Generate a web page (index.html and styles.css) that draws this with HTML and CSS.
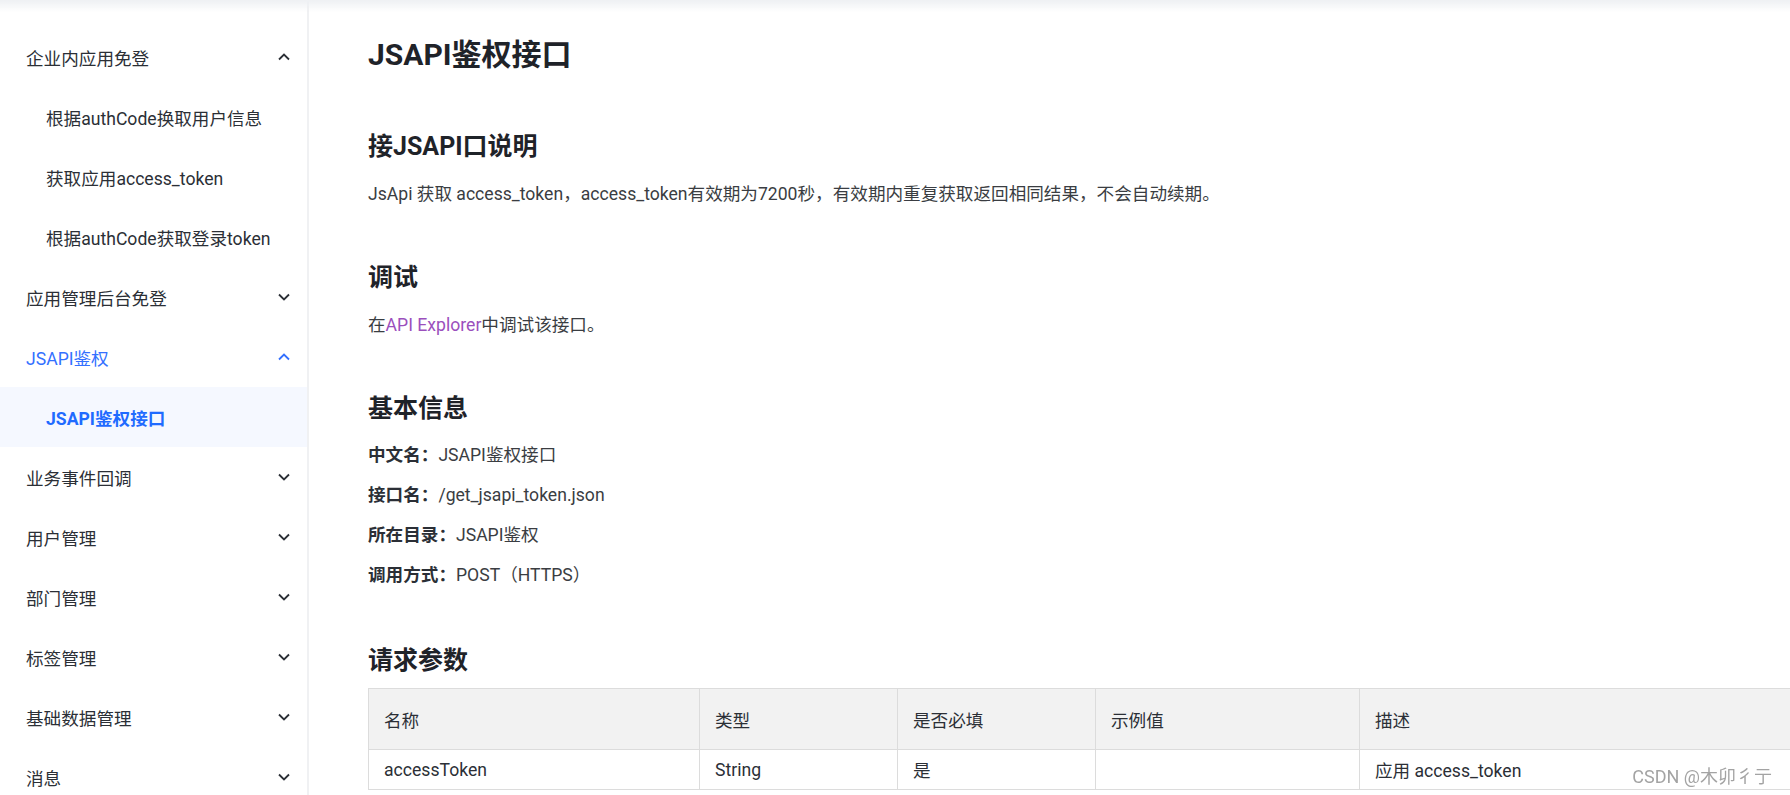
FILE: index.html
```html
<!DOCTYPE html>
<html lang="zh-CN">
<head>
    <meta charset="UTF-8">
    <meta name="viewport" content="width=device-width, initial-scale=1.0">
    <title>JSAPI鉴权接口</title>
    <link rel="stylesheet" href="styles.css">
</head>
<body>
    <div class="top-shadow"></div>
    <div class="layout">
        <nav class="sidebar">
            <div class="menu-group">
                <div class="menu-title">企业内应用免登 <svg class="chevron" viewBox="0 0 12 8"><path d="M1 6.5 6 1.5l5 5"/></svg></div>
                <div class="menu-item">根据authCode换取用户信息</div>
                <div class="menu-item">获取应用access_token</div>
                <div class="menu-item">根据authCode获取登录token</div>
            </div>
            <div class="menu-title">应用管理后台免登 <svg class="chevron" viewBox="0 0 12 8"><path d="M1 1.5 6 6.5l5-5"/></svg></div>
            <div class="menu-group">
                <div class="menu-title active">JSAPI鉴权 <svg class="chevron" viewBox="0 0 12 8"><path d="M1 6.5 6 1.5l5 5"/></svg></div>
                <div class="menu-item selected">JSAPI鉴权接口</div>
            </div>
            <div class="menu-title">业务事件回调 <svg class="chevron" viewBox="0 0 12 8"><path d="M1 1.5 6 6.5l5-5"/></svg></div>
            <div class="menu-title">用户管理 <svg class="chevron" viewBox="0 0 12 8"><path d="M1 1.5 6 6.5l5-5"/></svg></div>
            <div class="menu-title">部门管理 <svg class="chevron" viewBox="0 0 12 8"><path d="M1 1.5 6 6.5l5-5"/></svg></div>
            <div class="menu-title">标签管理 <svg class="chevron" viewBox="0 0 12 8"><path d="M1 1.5 6 6.5l5-5"/></svg></div>
            <div class="menu-title">基础数据管理 <svg class="chevron" viewBox="0 0 12 8"><path d="M1 1.5 6 6.5l5-5"/></svg></div>
            <div class="menu-title">消息 <svg class="chevron" viewBox="0 0 12 8"><path d="M1 1.5 6 6.5l5-5"/></svg></div>
        </nav>

        <main class="content">
            <h1>JSAPI鉴权接口</h1>

            <section>
                <h2>接JSAPI口说明</h2>
                <p>JsApi 获取 access_token，access_token有效期为7200秒，有效期内重复获取返回相同结果，不会自动续期。</p>
            </section>

            <section>
                <h2>调试</h2>
                <p>在<a href="#">API Explorer</a>中调试该接口。</p>
            </section>

            <section>
                <h2>基本信息</h2>
                <div class="info"><b>中文名：</b>JSAPI鉴权接口</div>
                <div class="info"><b>接口名：</b>/get_jsapi_token.json</div>
                <div class="info"><b>所在目录：</b>JSAPI鉴权</div>
                <div class="info"><b>调用方式：</b>POST（HTTPS）</div>
            </section>

            <section class="params-section">
                <h2>请求参数</h2>
                <table class="params">
                    <colgroup>
                        <col style="width: 331px">
                        <col style="width: 198px">
                        <col style="width: 198px">
                        <col style="width: 264px">
                        <col style="width: 520px">
                    </colgroup>
                    <thead>
                        <tr><th>名称</th><th>类型</th><th>是否必填</th><th>示例值</th><th>描述</th></tr>
                    </thead>
                    <tbody>
                        <tr><td>accessToken</td><td>String</td><td>是</td><td></td><td>应用 access_token</td></tr>
                    </tbody>
                </table>
            </section>
        </main>
    </div>
    <div class="watermark">CSDN @木卯彳亍</div>
</body>
</html>
```

FILE: styles.css
```css
body {
    margin: 0;
    font-family: Roboto, "Noto Sans CJK SC", sans-serif;
    color: #1f2329;
    background: #fff;
    overflow: hidden;
}
.top-shadow {
    position: fixed;
    top: 0;
    left: 0;
    right: 0;
    height: 12px;
    background: linear-gradient(to bottom, #eef0f3, rgba(255, 255, 255, 0));
    z-index: 2;
}
.layout {
    display: flex;
    height: 795px;
}
.sidebar {
    width: 307px;
    flex-shrink: 0;
    border-right: 2px solid #f0f1f3;
    padding-top: 27px;
    box-sizing: content-box;
}
.menu-title,
.menu-item {
    height: 60px;
    display: flex;
    align-items: center;
    font-size: 17.6px;
    color: #2b2f36;
}
.menu-title {
    justify-content: space-between;
    padding: 0 17px 0 26px;
}
.menu-item {
    padding-left: 46px;
}
.menu-title.active {
    color: #3370ff;
}
.menu-item.selected {
    background: #f5f8ff;
    color: #1f6bff;
    font-weight: bold;
}
.chevron {
    width: 12px;
    height: 8px;
    fill: none;
    stroke: #2b2f36;
    stroke-width: 1.8;
}
.menu-title.active .chevron {
    stroke: #3370ff;
}
.content {
    flex: 1;
    padding: 33px 0 0 59px;
    overflow: hidden;
}
h1 {
    margin: 0;
    font-size: 30px;
    line-height: 44px;
    font-weight: bold;
}
section {
    margin-top: 53px;
}
h2 {
    margin: 0 0 16px;
    font-size: 25px;
    line-height: 34px;
    font-weight: bold;
}
p {
    margin: 0;
    font-size: 17.6px;
    line-height: 28px;
    color: #3a3d42;
}
a {
    color: #9b4fbd;
    text-decoration: none;
}
.info {
    font-size: 17.6px;
    line-height: 40px;
    color: #3a3d42;
}
.info:first-of-type {
    margin-top: -7px;
}
.info b {
    color: #2b2f36;
}
.params-section {
    margin-top: 49px;
}
.params {
    border-collapse: collapse;
    table-layout: fixed;
    width: 1511px;
    margin-top: -6px;
    font-size: 17.6px;
    color: #2b2f36;
}
.params th,
.params td {
    border: 1px solid #dcdcdc;
    text-align: left;
    padding: 0 15px;
}
.params th {
    background: #f2f2f2;
    font-weight: normal;
    height: 60px;
}
.params td {
    height: 39px;
}
.watermark {
    position: fixed;
    right: 18px;
    bottom: 7px;
    font-size: 18px;
    color: #9a9a9a;
    opacity: 0.9;
}
```
